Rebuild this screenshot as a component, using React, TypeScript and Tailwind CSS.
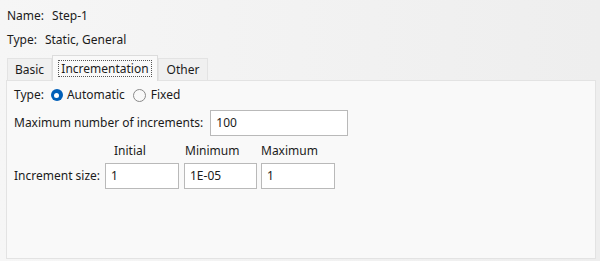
import React from 'react'

const font = { fontFamily: '"Noto Sans", "Open Sans", sans-serif' }

function Field({ value, className }: { value: string; className: string }) {
  return (
    <div className={`h-[26px] bg-white border border-[#b9b9b9] flex items-center pl-[5px] text-[12px] text-[#1b1b1b] ${className}`}>
      {value}
    </div>
  )
}

export default function App() {
  return (
    <div className="w-[600px] h-[261px] overflow-hidden bg-gradient-to-r from-[#f6f6f6] to-[#eeeeee] text-[12px] text-[#1b1b1b] leading-none" style={font}>
      {/* header lines */}
      <div className="h-[28px] flex items-center pl-[7px] pt-[4px]">
        <span>Name:</span>
        <span className="ml-[8px]">Step-1</span>
      </div>
      <div className="h-[24px] flex items-center pl-[7px]">
        <span>Type:</span>
        <span className="ml-[8px]">Static, General</span>
      </div>

      {/* tabs */}
      <div className="h-[28px] flex items-end pl-[7px]">
        <div className="h-[22px] w-[45px] flex items-center justify-center border border-b-0 border-[#e3e3e3] bg-[#f0f0f0]">Basic</div>
        <div className="h-[26px] w-[106px] -mb-px relative z-10 flex items-center justify-center border border-b-0 border-[#dcdcdc] bg-[#f9f9f9]">
          <div className="border border-dotted border-[#555] px-[2px] h-[17px] flex items-center">Incrementation</div>
        </div>
        <div className="h-[22px] w-[50px] flex items-center justify-center border border-b-0 border-[#e3e3e3] bg-[#f0f0f0]">Other</div>
      </div>

      {/* panel */}
      <div className="ml-[6px] w-[590px] h-[179px] border border-[#e3e3e3] bg-[#f9f9f9] pl-[7px] pt-[6px]">
        <div className="h-[16px] flex items-center">
          <span>Type:</span>
          <span className="ml-[7px] w-[12px] h-[12px] rounded-full bg-[#005fb8] flex items-center justify-center">
            <span className="w-[5px] h-[5px] rounded-full bg-white" />
          </span>
          <span className="ml-[4px]">Automatic</span>
          <span className="ml-[8px] w-[13px] h-[13px] rounded-full border border-[#8a8a8a] bg-[#f9f9f9]" />
          <span className="ml-[5px]">Fixed</span>
        </div>

        <div className="mt-[7px] flex items-center">
          <span>Maximum number of increments:</span>
          <Field value="100" className="ml-[7px] w-[138px] h-[25px]" />
        </div>

        <div className="mt-[8px] flex h-[14px] items-center pl-[91px]">
          <span className="w-[79px] pl-[9px]">Initial</span>
          <span className="w-[77px] pl-[1px]">Minimum</span>
          <span>Maximum</span>
        </div>

        <div className="mt-[5px] flex items-center">
          <span className="w-[91px]">Increment size:</span>
          <Field value="1" className="w-[74px]" />
          <Field value="1E-05" className="ml-[5px] w-[73px]" />
          <Field value="1" className="ml-[4px] w-[74px]" />
        </div>
      </div>
    </div>
  )
}
